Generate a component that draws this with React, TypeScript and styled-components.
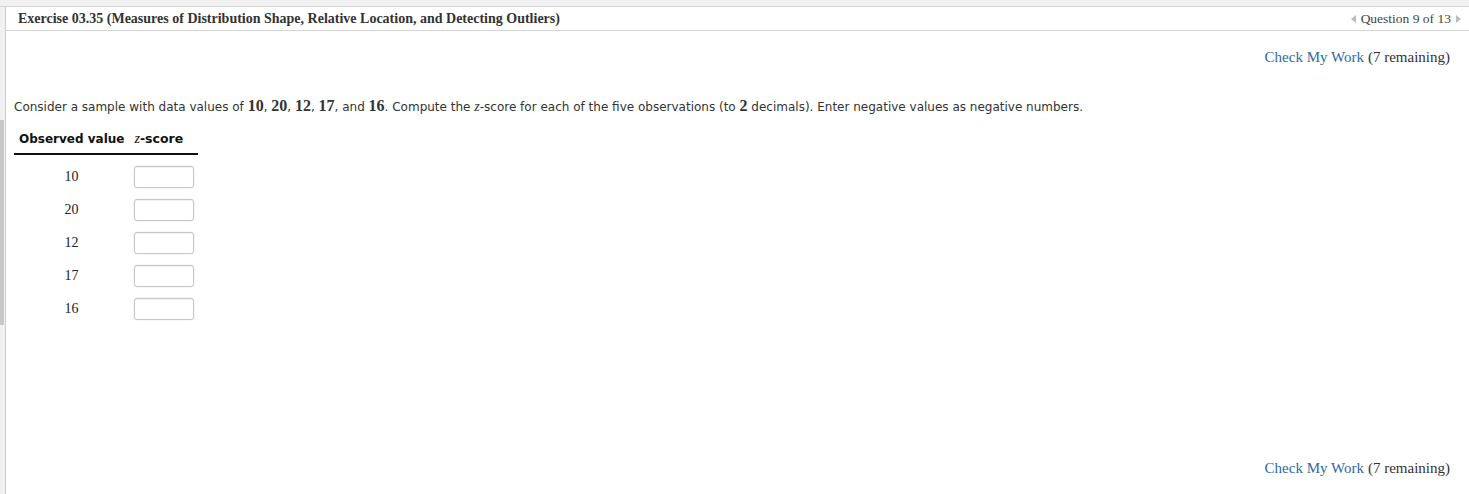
import React from "react";
import styled, { createGlobalStyle } from "styled-components";

const Global = createGlobalStyle`
  html, body { margin: 0; padding: 0; background: #fff; }
  body { font-family: "DejaVu Sans", Verdana, sans-serif; color: #333; }
`;

const Page = styled.div`
  display: flex;
  flex-direction: column;
  width: 1469px;
  height: 494px;
  overflow: hidden;
`;

const TopStrip = styled.div`
  height: 6px;
  background: #f1f1f1;
  border-bottom: 1px solid #d4d4d4;
  flex: none;
`;

const Body = styled.div`
  display: flex;
  flex: 1;
  min-height: 0;
`;

const Gutter = styled.div`
  width: 5px;
  flex: none;
  background: #f1f1f1;
  border-right: 1px solid #cfcfcf;
  display: flex;
  flex-direction: column;
`;

const Thumb = styled.div`
  margin-top: 113px;
  width: 4px;
  height: 205px;
  background: #c8c8c8;
`;

const Main = styled.div`
  flex: 1;
  display: flex;
  flex-direction: column;
  min-width: 0;
`;

const Header = styled.div`
  height: 23px;
  border-bottom: 1px solid #d4d4d4;
  display: flex;
  align-items: center;
  justify-content: space-between;
  padding: 0 8px 0 12px;
`;

const Title = styled.div`
  font-family: "Liberation Serif", serif;
  font-weight: bold;
  font-size: 14px;
  color: #333;
`;

const QNav = styled.div`
  display: flex;
  align-items: center;
  gap: 5px;
  font-family: "Liberation Serif", serif;
  font-size: 13.5px;
  color: #444;
`;

const Arrow = styled.span<{ $dir: "l" | "r" }>`
  width: 0;
  height: 0;
  border-top: 4px solid transparent;
  border-bottom: 4px solid transparent;
  ${(p) =>
    p.$dir === "l"
      ? "border-right: 5px solid #bbb;"
      : "border-left: 5px solid #bbb;"}
`;

const CheckRow = styled.div<{ $top: number }>`
  display: flex;
  justify-content: flex-end;
  padding-right: 19px;
  margin-top: ${(p) => p.$top}px;
  font-family: "Liberation Serif", Georgia, serif;
  font-size: 15px;
  line-height: 18px;
  color: #333;
`;

const Link = styled.a`
  color: #2d6a9f;
  text-decoration: none;
  margin-right: 4px;
`;

const Question = styled.p`
  margin: 31px 0 0 8px;
  font-size: 12px;
  line-height: 18px;
  color: #333;
`;

const MathNum = styled.span`
  font-family: "Liberation Serif", serif;
  font-weight: bold;
  font-size: 16px;
`;

const MathVar = styled.span`
  font-family: "Liberation Serif", serif;
  font-style: italic;
  font-weight: normal;
  font-size: 14px;
`;

const Table = styled.div`
  margin: 7px 0 0 8px;
  width: 184px;
  display: flex;
  flex-direction: column;
`;

const HeadRow = styled.div`
  display: flex;
  align-items: center;
  height: 24px;
  border-bottom: 2px solid #111;
  padding-left: 5px;
  padding-top: 4px;
  padding-bottom: 2px;
  box-sizing: content-box;
  font-size: 12px;
  font-weight: bold;
  color: #111;
`;

const ZHead = styled.span`
  margin-left: 10px;
  font-size: 12.5px;
`;

const Row = styled.div`
  display: flex;
  align-items: center;
  height: 33px;
`;

const Rows = styled.div`
  display: flex;
  flex-direction: column;
  padding-top: 5px;
`;

const Value = styled.div`
  width: 115px;
  text-align: center;
  font-family: "Liberation Serif", serif;
  font-size: 14px;
  color: #222;
`;

const Input = styled.input`
  width: 60px;
  height: 22px;
  box-sizing: border-box;
  border: 1px solid #c8c8c8;
  border-radius: 3px;
  box-shadow: inset 0 1px 1px rgba(0, 0, 0, 0.06), 0 0 2px rgba(0, 0, 0, 0.12);
  margin-left: 5px;
  background: #fff;
`;

const values = [10, 20, 12, 17, 16];

export default function App() {
  return (
    <>
      <Global />
      <Page>
        <TopStrip />
        <Body>
          <Gutter>
            <Thumb />
          </Gutter>
          <Main>
            <Header>
              <Title>
                Exercise 03.35 (Measures of Distribution Shape, Relative Location, and Detecting Outliers)
              </Title>
              <QNav>
                <Arrow $dir="l" />
                <span>Question 9 of 13</span>
                <Arrow $dir="r" />
              </QNav>
            </Header>
            <CheckRow $top={17}>
              <Link href="#">Check My Work</Link>
              <span>(7 remaining)</span>
            </CheckRow>
            <Question>
              Consider a sample with data values of <MathNum>10</MathNum>, <MathNum>20</MathNum>,{" "}
              <MathNum>12</MathNum>, <MathNum>17</MathNum>, and <MathNum>16</MathNum>. Compute the{" "}
              <MathVar>z</MathVar>-score for each of the five observations (to <MathNum>2</MathNum>{" "}
              decimals). Enter negative values as negative numbers.
            </Question>
            <Table>
              <HeadRow>
                <span>Observed value</span>
                <ZHead>
                  <MathVar>z</MathVar>-score
                </ZHead>
              </HeadRow>
              <Rows>
                {values.map((v) => (
                  <Row key={v}>
                    <Value>{v}</Value>
                    <Input type="text" />
                  </Row>
                ))}
              </Rows>
            </Table>
            <CheckRow $top={134}>
              <Link href="#">Check My Work</Link>
              <span>(7 remaining)</span>
            </CheckRow>
          </Main>
        </Body>
      </Page>
    </>
  );
}
